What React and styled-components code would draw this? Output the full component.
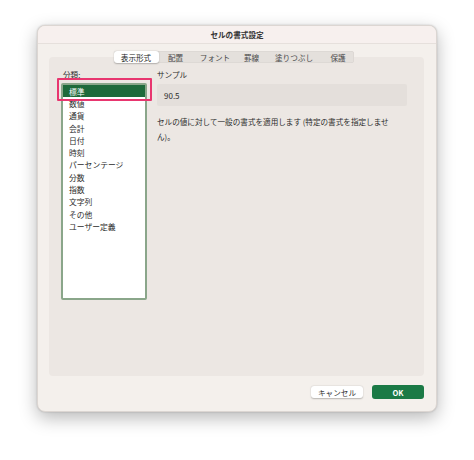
import React from "react";
import styled, { createGlobalStyle } from "styled-components";

const GlobalStyle = createGlobalStyle`
  html, body {
    margin: 0;
    padding: 0;
    background: #ffffff;
  }
  body {
    font-family: "Noto Sans CJK JP", "Noto Sans", sans-serif;
    color: #2b2b2b;
  }
`;

const Page = styled.div`
  width: 474px;
  height: 460px;
  padding: 25px 0 0 37px;
  box-sizing: border-box;
`;

const Window = styled.div`
  width: 400px;
  height: 387px;
  box-sizing: border-box;
  background: #f4f0ec;
  border-radius: 8px;
  border: 1px solid #dcd6d2;
  box-shadow: 0 6px 18px rgba(0, 0, 0, 0.28), 0 0 2px rgba(0, 0, 0, 0.2);
  display: flex;
  flex-direction: column;
  overflow: hidden;
`;

const TitleBar = styled.div`
  height: 17px;
  display: flex;
  align-items: center;
  justify-content: center;
  background: #f7f0ee;
  border-bottom: 1px solid #e6e0dc;
  font-size: 7.6px;
  font-weight: 700;
  color: #333;
`;

const Body = styled.div`
  flex: 1;
  display: flex;
  flex-direction: column;
  padding: 7px 12px 0 11px;
`;

const TabRow = styled.div`
  position: relative;
  z-index: 1;
  align-self: center;
  display: flex;
  height: 12px;
  margin-left: -6px;
  background: #e4e0dc;
  border-radius: 3px;
  box-shadow: inset 0 0 0 0.5px #d6d1cd;
`;

const Tab = styled.div`
  display: flex;
  align-items: center;
  justify-content: center;
  width: ${(p) => p.w}px;
  font-size: 7.6px;
  color: ${(p) => (p.active ? "#222" : "#4a4a4a")};
  background: ${(p) => (p.active ? "#ffffff" : "transparent")};
  border-radius: 3px;
  box-shadow: ${(p) => (p.active ? "0 0.5px 1.5px rgba(0,0,0,0.25)" : "none")};
  position: relative;

  & + &::before {
    content: "";
    position: absolute;
    left: 0;
    top: 3px;
    bottom: 3px;
    width: 1px;
    background: ${(p) => (p.sep ? "#cdc8c4" : "transparent")};
  }
`;

const Panel = styled.div`
  margin-top: -6px;
  height: 319px;
  box-sizing: border-box;
  background: #ece7e3;
  border-radius: 4px;
  padding: 13px 17px 0 12px;
  display: flex;
  gap: 10px;
`;

const LeftColumn = styled.div`
  position: relative;
  width: 86px;
  display: flex;
  flex-direction: column;
`;

const Label = styled.div`
  font-size: 7.6px;
  line-height: 10px;
  padding-left: 2px;
  margin-bottom: 3px;
`;

const ListBox = styled.div`
  height: 217px;
  box-sizing: border-box;
  background: #ffffff;
  border: 2px solid #8aa68a;
  border-radius: 2px;
  padding-top: 0;
`;

const Item = styled.div`
  height: 12.3px;
  display: flex;
  align-items: center;
  padding-left: 6px;
  font-size: 7.8px;
  color: ${(p) => (p.selected ? "#ffffff" : "#2b2b2b")};
  background: ${(p) => (p.selected ? "#1e6a3b" : "transparent")};
`;

const Highlight = styled.div`
  position: absolute;
  left: -4px;
  top: 8px;
  width: 95px;
  height: 23px;
  box-sizing: border-box;
  border: 2px solid #e8366f;
  border-radius: 1px;
`;

const RightColumn = styled.div`
  flex: 1;
  display: flex;
  flex-direction: column;
`;

const SampleBox = styled.div`
  height: 22px;
  display: flex;
  align-items: center;
  padding-left: 7px;
  background: #e4dfdb;
  border-radius: 2px;
  font-size: 8px;
  margin-top: 1px;
`;

const Description = styled.div`
  margin-top: 8px;
  font-size: 7.6px;
  line-height: 15px;
  padding-right: 6px;
`;

const Footer = styled.div`
  display: flex;
  justify-content: flex-end;
  align-items: center;
  gap: 9px;
  padding-top: 9px;
`;

const Button = styled.div`
  width: 52px;
  height: ${(p) => (p.primary ? 14 : 12)}px;
  display: flex;
  align-items: center;
  justify-content: center;
  border-radius: 3px;
  font-size: 7.6px;
  color: ${(p) => (p.primary ? "#ffffff" : "#333")};
  background: ${(p) => (p.primary ? "#1b7a46" : "#ffffff")};
  box-shadow: ${(p) =>
    p.primary ? "none" : "0 0.5px 1.5px rgba(0,0,0,0.25)"};
  font-weight: ${(p) => (p.primary ? 700 : 400)};
`;

const tabs = [
  { name: "表示形式", w: 45 },
  { name: "配置", w: 34 },
  { name: "フォント", w: 45 },
  { name: "罫線", w: 28 },
  { name: "塗りつぶし", w: 57 },
  { name: "保護", w: 31 },
];

const categories = [
  "標準",
  "数値",
  "通貨",
  "会計",
  "日付",
  "時刻",
  "パーセンテージ",
  "分数",
  "指数",
  "文字列",
  "その他",
  "ユーザー定義",
];

export default function App() {
  return (
    <>
      <GlobalStyle />
      <Page>
        <Window>
          <TitleBar>セルの書式設定</TitleBar>
          <Body>
            <TabRow>
              {tabs.map((t, i) => (
                <Tab key={t.name} w={t.w} active={i === 0} sep={i > 1}>
                  {t.name}
                </Tab>
              ))}
            </TabRow>
            <Panel>
              <LeftColumn>
                <Label>分類:</Label>
                <ListBox>
                  {categories.map((c, i) => (
                    <Item key={c} selected={i === 0}>
                      {c}
                    </Item>
                  ))}
                </ListBox>
                <Highlight />
              </LeftColumn>
              <RightColumn>
                <Label style={{ paddingLeft: 0 }}>サンプル</Label>
                <SampleBox>90.5</SampleBox>
                <Description>
                  セルの値に対して一般の書式を適用します (特定の書式を指定しません)。
                </Description>
              </RightColumn>
            </Panel>
            <Footer>
              <Button>キャンセル</Button>
              <Button primary>OK</Button>
            </Footer>
          </Body>
        </Window>
      </Page>
    </>
  );
}
